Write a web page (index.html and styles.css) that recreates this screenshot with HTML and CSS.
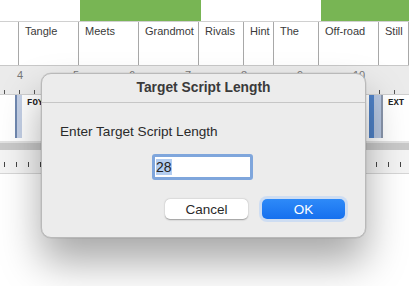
FILE: index.html
```html
<!DOCTYPE html>
<html lang="en">
<head>
  <meta charset="UTF-8" />
  <title>Target Script Length</title>
  <link rel="stylesheet" href="styles.css">
</head>
<body>
  <div class="app">
    <div class="lanes">
      <div class="lane" style="width: 80px"></div>
      <div class="lane green" style="width: 121px"></div>
      <div class="lane" style="width: 120px"></div>
      <div class="lane green grow"></div>
    </div>
    <div class="cards">
      <div class="card" style="width: 19px"></div>
      <div class="card" style="width: 60px">Tangle</div>
      <div class="card" style="width: 60px">Meets</div>
      <div class="card" style="width: 60px">Grandmot</div>
      <div class="card" style="width: 45px">Rivals</div>
      <div class="card" style="width: 30px">Hint</div>
      <div class="card" style="width: 45px">The</div>
      <div class="card" style="width: 60px">Off-road</div>
      <div class="card grow">Still</div>
    </div>
    <div class="ruler">
      <div class="nums">
        <span>4</span><span>5</span><span>6</span><span>7</span><span>8</span><span>9</span><span>10</span>
      </div>
      <div class="ticks"></div>
    </div>
    <div class="track">
      <div class="gap-left"></div>
      <div class="bar dark"></div>
      <div class="bar light"></div>
      <div class="slug">FOY</div>
      <div class="grow"></div>
      <div class="bar blue"></div>
      <div class="bar pale"></div>
      <div class="bar line"></div>
      <div class="slug ext">EXT</div>
    </div>
    <div class="band"></div>
    <div class="ruler2"></div>
    <div class="floor"></div>
  </div>

  <div class="dialog">
    <div class="dialog-title">Target Script Length</div>
    <div class="dialog-body">
      <div class="prompt">Enter Target Script Length</div>
      <div class="field">
        <div class="input"><span class="sel">28</span></div>
      </div>
      <div class="actions">
        <button class="btn">Cancel</button>
        <button class="btn primary">OK</button>
      </div>
    </div>
  </div>
</body>
</html>
```

FILE: styles.css
```css
* {
  box-sizing: border-box;
  margin: 0;
  padding: 0;
}

body {
  width: 409px;
  height: 286px;
  overflow: hidden;
  background: #fff;
  font-family: 'Liberation Sans', Arial, sans-serif;
  color: #222;
  position: relative;
}

.grow {
  flex: 1;
}

.lanes {
  display: flex;
  height: 21px;
}

.lane.green {
  background: #78b554;
}

.cards {
  display: flex;
  height: 44px;
  border-top: 1px solid #d0d0d0;
}

.card {
  border-right: 1px solid #a8a8a8;
  font-size: 11px;
  color: #3a3a3a;
  padding: 3px 0 0 6px;
  white-space: nowrap;
  overflow: hidden;
}

.ruler {
  height: 29px;
  background: #ebebeb;
  border-top: 1px solid #c8c8c8;
}

.nums {
  display: flex;
  padding: 3px 0 0 17px;
  height: 18px;
  font-size: 11px;
  color: #777;
}

.nums span {
  width: 60px;
}

.ticks {
  height: 10px;
  margin-top: 1px;
  background: repeating-linear-gradient(90deg, transparent 0, transparent 4px, #555 4px, #555 5px, transparent 5px, transparent 15px);
  background-size: 100% 5px;
  background-position: 0 5px;
  background-repeat: repeat-x;
}

.track {
  display: flex;
  height: 47px;
  background: #fff;
  border-top: 1px solid #cfcfcf;
  padding-bottom: 3px;
}

.gap-left {
  width: 15px;
}

.bar {
  height: 100%;
}

.bar.dark {
  width: 2px;
  background: #7088b0;
}

.bar.light {
  width: 5px;
  background: #c4d0e6;
}

.bar.blue {
  width: 5px;
  background: #4f82c8;
}

.bar.pale {
  width: 7px;
  background: #b8c8e2;
}

.bar.line {
  width: 2px;
  background: #8a96ac;
}

.slug {
  font-family: 'Liberation Mono', monospace;
  font-weight: bold;
  font-size: 9px;
  padding: 3px 0 0 5px;
  color: #222;
}

.slug.ext {
  width: 26px;
}

.band {
  height: 9px;
  background: linear-gradient(#e2e2e2 0, #e2e2e2 2px, #c9c9c9 2px);
}

.ruler2 {
  height: 24px;
  background:
    repeating-linear-gradient(90deg, transparent 0, transparent 4px, #444 4px, #444 5px, transparent 5px, transparent 12px) 0 12px / 100% 5px repeat-x,
    #f4f4f4;
  border-bottom: 1px solid #d6d6d6;
}

.floor {
  height: 120px;
  background: #fff;
}

.dialog {
  position: absolute;
  left: 41px;
  top: 73px;
  width: 325px;
  height: 165px;
  background: #ececec;
  border: 1px solid #b9b9b9;
  border-radius: 10px;
  box-shadow: 0 24px 40px rgba(0, 0, 0, 0.34), 0 0 0 0.5px rgba(0, 0, 0, 0.1);
}

.dialog-title {
  height: 29px;
  border-bottom: 1px solid #c6c6c6;
  text-align: center;
  font-weight: bold;
  font-size: 13.8px;
  line-height: 28px;
  color: #3a3a3a;
}

.dialog-body {
  padding: 21px 20px 0 18px;
}

.prompt {
  font-size: 13.6px;
  color: #2a2a2a;
  line-height: 16px;
}

.field {
  display: flex;
  justify-content: center;
  margin-top: 14px;
}

.input {
  width: 101px;
  height: 26px;
  border: 3px solid #7fa6dc;
  border-radius: 3px;
  background: #fff;
  font-size: 14px;
  line-height: 20px;
  padding-left: 1px;
  color: #222;
}

.sel {
  background: #b3cdf0;
}

.actions {
  display: flex;
  justify-content: flex-end;
  gap: 14px;
  margin-top: 19px;
}

.btn {
  width: 83px;
  height: 20px;
  border: none;
  border-radius: 5px;
  background: #fff;
  box-shadow: 0 0.5px 1.5px rgba(0, 0, 0, 0.35);
  font-family: 'Liberation Sans', Arial, sans-serif;
  font-size: 13.5px;
  color: #2a2a2a;
}

.btn.primary {
  background: linear-gradient(#2e8af8, #1670ee);
  color: #fff;
  box-shadow: 0 0 0 3px rgba(170, 205, 250, 0.45);
}
```
